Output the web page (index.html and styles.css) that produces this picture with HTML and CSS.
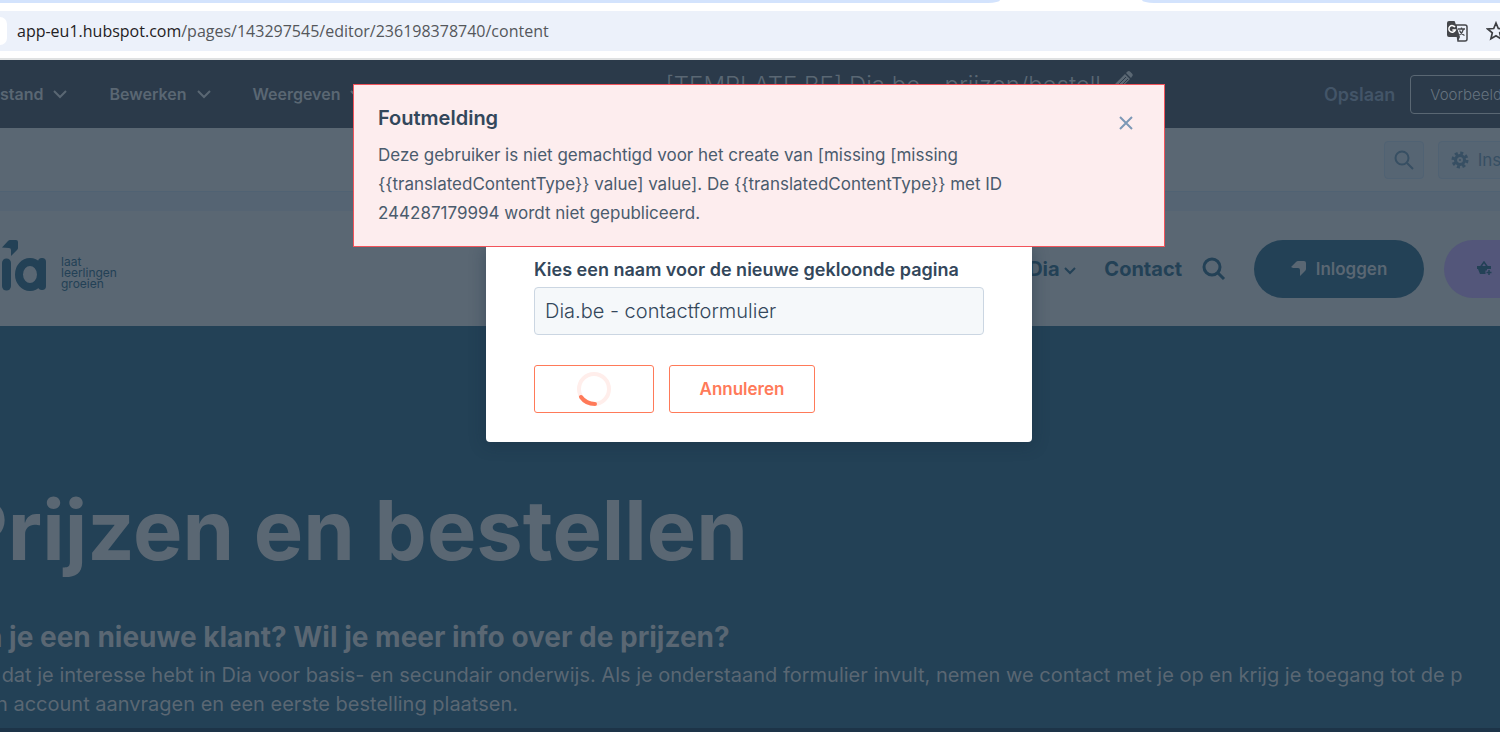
FILE: index.html
```html
<!DOCTYPE html>
<html lang="nl">
<head>
  <meta charset="UTF-8" />
  <meta name="viewport" content="width=device-width, initial-scale=1.0" />
  <title>Dia.be - prijzen/bestellen</title>
  <link rel="stylesheet" href="styles.css">
</head>
<body>
  <div class="browser">
    <div class="tab-strip"><span class="tab-left"></span><span class="tab-right"></span></div>
    <div class="address-bar">
      <span class="site-info"></span>
      <p class="url"><strong>app-eu1.hubspot.com</strong>/pages/143297545/editor/236198378740/content</p>
      <button class="chrome-btn" aria-label="Vertalen">
        <svg width="22" height="22" viewBox="0 0 22 22">
          <path d="M10 5h9q2 0 2 2v12q0 2-2 2h-7z" fill="none" stroke="#45474b" stroke-width="1.5"/>
          <path d="M3 1h5q1 0 1 1l5 15H3q-2 0-2-2V3q0-2 2-2z" fill="#45474b"/>
          <path d="M12 17h2l-2 4z" fill="#45474b"/>
          <path d="M9 7.2A3.3 3.3 0 1 0 9.3 10H6.4" fill="none" stroke="#fff" stroke-width="1.5"/>
          <path d="M12 9h7M15.5 7.5V9M17.5 9q-1 4-4 6M13.5 10.5q1.500 3.500 5 5" fill="none" stroke="#45474b" stroke-width="1.3"/>
        </svg>
      </button>
      <button class="chrome-btn star" aria-label="Bladwijzer">
        <svg width="20" height="20" viewBox="0 0 20 20"><path d="M10 2l2.3 5.5 6 .5-4.6 3.900 1.400 5.900L10 14.700l-5.100 3.100 1.400-5.900L1.700 8l6-.5z" fill="none" stroke="#3c3e42" stroke-width="1.7"/></svg>
      </button>
    </div>
  </div>

  <div class="app">
    <header class="navbar">
      <nav class="menu">
        <button class="menu-item">stand <svg width="14" height="10" viewBox="0 0 14 10"><path d="M1 2l6 6 6-6"/></svg></button>
        <button class="menu-item">Bewerken <svg width="14" height="10" viewBox="0 0 14 10"><path d="M1 2l6 6 6-6"/></svg></button>
        <button class="menu-item">Weergeven <svg width="14" height="10" viewBox="0 0 14 10"><path d="M1 2l6 6 6-6"/></svg></button>
      </nav>
      <div class="page-title">
        <span>[TEMPLATE BE] Dia.be - prijzen/bestell</span>
        <svg width="20" height="20" viewBox="0 0 20 20"><path d="M1 19l1-6L12 3l5 5L7 18zM13 2l1.500-1.500q1.500-1 3 .5l1.500 1.500q1.500 1.500 0 3L18 7z" fill="#5a6773"/><path d="M5 14l8-8M7 16l8-8" stroke="#2b3a4a"/></svg>
      </div>
      <div class="actions">
        <button class="save-btn">Opslaan</button>
        <button class="preview-btn">Voorbeeld</button>
      </div>
    </header>

    <div class="toolbar">
      <button class="tool-btn" aria-label="Zoeken">
        <svg width="20" height="20" viewBox="0 0 20 20"><circle cx="8" cy="8" r="6.5"/><path d="M13 13l6 6"/></svg>
      </button>
      <button class="tool-btn settings">
        <svg width="18" height="18" viewBox="0 0 18 18"><circle cx="9" cy="9" r="7" stroke-width="3" stroke-dasharray="3 2.5"/><circle cx="9" cy="9" r="4.5" stroke-width="3"/><circle cx="9" cy="9" r="1" fill="#374f63" stroke="none"/></svg>
        Instellingen
      </button>
    </div>

    <div class="site-header">
      <a class="logo" href="#" aria-label="Dia">
        <svg width="47" height="52" viewBox="0 0 47 52">
          <path d="M2 7.500L8 1q1-1 2-1h6q2 0 2 2v6q0 1-1 2l-6 6v-6q0-2-2-2z" fill="#234156"/>
          <path d="M6.500 23v23" stroke="#234156" stroke-width="9" stroke-linecap="round"/>
          <ellipse cx="30" cy="34.500" rx="11" ry="12.500" fill="none" stroke="#234156" stroke-width="8"/>
          <path d="M42 22v24" stroke="#234156" stroke-width="8" stroke-linecap="round"/>
        </svg>
        <span>laat<br>leerlingen<br>groeien</span>
      </a>
      <nav class="site-nav">
        <a href="#">Dia <svg width="12" height="10" viewBox="0 0 12 10"><path d="M1 2l5 5 5-5"/></svg></a>
        <a href="#">Contact</a>
        <button class="search" aria-label="Zoeken">
          <svg width="24" height="24" viewBox="0 0 24 24"><circle cx="10" cy="10" r="8"/><path d="M16 16l6 6"/></svg>
        </button>
        <a class="pill" href="#">
          <svg width="16" height="16" viewBox="0 0 16 16"><path d="M0 6l5-5q1-1 2-1h6q2 0 2 2v6q0 1-1 2l-5 5V9q0-2-2-2H2z" fill="#5a6773"/></svg>
          Inloggen
        </a>
        <a class="pill order" href="#">
          <svg width="16" height="15" viewBox="0 0 16 15"><path d="M0 5h14v3H0zM1 8h11v2l-3 3H3z" fill="#234156"/><path d="M3.500 6L7 1l3.500 5" fill="none" stroke="#234156" stroke-width="1.5"/><path d="M12 8v7M8.500 11.500h7" stroke="#53567a" stroke-width="4"/><path d="M12 9v5M9.500 11.500h5" stroke="#234156" stroke-width="1.5"/></svg>
          Bestellen
        </a>
      </nav>
    </div>

    <main class="hero">
      <h1>Prijzen en bestellen</h1>
      <h2>n je een nieuwe klant? Wil je meer info over de prijzen?</h2>
      <p>&nbsp;dat je interesse hebt in Dia voor basis- en secundair onderwijs. Als je onderstaand formulier invult, nemen we contact met je op en krijg je toegang tot de p<br>n account aanvragen en een eerste bestelling plaatsen.</p>
    </main>

    <div class="overlay">
      <section class="alert" role="alert">
        <h3>Foutmelding</h3>
        <p>Deze gebruiker is niet gemachtigd voor het create van [missing [missing<br>{{translatedContentType}} value] value]. De {{translatedContentType}} met ID<br>244287179994 wordt niet gepubliceerd.</p>
        <button class="close" aria-label="Sluiten">
          <svg width="14" height="14" viewBox="0 0 14 14"><path d="M1 1l12 12M13 1L1 13"/></svg>
        </button>
      </section>

      <form class="modal">
        <label for="name">Kies een naam voor de nieuwe gekloonde pagina</label>
        <input type="text" id="name" value="Dia.be - contactformulier">
        <div class="buttons">
          <button type="submit" class="btn loading" aria-label="Klonen">
            <svg width="34" height="34" viewBox="0 0 34 34"><circle cx="17" cy="17" r="15" stroke="#ffeeeb"/><path d="M4 25q5 7 14 7" stroke="#ff7a59" stroke-linecap="round"/></svg>
          </button>
          <button type="button" class="btn">Annuleren</button>
        </div>
      </form>
    </div>
  </div>
</body>
</html>
```
FILE: styles.css
```css
* {
  margin: 0;
  padding: 0;
  box-sizing: border-box;
}

body {
  font-family: 'Inter', sans-serif;
  background: #1d3448;
  min-height: 100vh;
  overflow: hidden;
}

button {
  font-family: inherit;
  background: none;
  border: none;
  white-space: nowrap;
}

a {
  color: inherit;
  text-decoration: none;
}

svg {
  flex-shrink: 0;
  fill: none;
}

.browser {
  background: #fff;
  padding-bottom: 7px;
  border-bottom: 2px solid #dfe1e2;
  overflow: hidden;
}

.tab-strip {
  display: flex;
  justify-content: space-between;
  height: 3px;
  margin-bottom: 8px;
}

.tab-left {
  width: 1000px;
  background: #d3e3fd;
  border-bottom-right-radius: 12px 3px;
}

.tab-right {
  width: 358px;
  background: #d3e3fd;
  border-bottom-left-radius: 12px 3px;
}

.address-bar {
  display: flex;
  align-items: center;
  height: 40px;
  background: #ecf1fa;
}

.site-info {
  width: 7px;
  height: 28px;
  background: #fff;
  border-radius: 0 14px 14px 0;
}

.url {
  flex: 1;
  margin-left: 10px;
  font-family: 'Open Sans', sans-serif;
  font-size: 16px;
  color: #54575b;
}

.url strong {
  font-weight: 400;
  color: #1f2124;
}

.chrome-btn {
  display: flex;
  margin-left: 18px;
}

.star {
  margin-right: -6px;
}

.app {
  position: relative;
  overflow: hidden;
}

.navbar {
  display: flex;
  height: 68px;
  background: #2b3a4a;
  color: #5a6773;
}

.menu {
  display: flex;
  align-items: center;
  gap: 42px;
}

.menu-item {
  display: flex;
  align-items: center;
  gap: 10px;
  font-size: 16px;
  font-weight: 600;
  color: #5a6773;
}

.menu-item svg {
  stroke: #5a6773;
  stroke-width: 2;
}

.page-title {
  display: flex;
  align-items: flex-start;
  gap: 12px;
  margin: 11px auto 0;
  padding-left: 110px;
  font-size: 24px;
  font-weight: 300;
  white-space: nowrap;
}

.actions {
  display: flex;
  align-items: center;
  gap: 15px;
  margin-right: -22px;
}

.save-btn {
  font-size: 18px;
  font-weight: 600;
  color: #435568;
}

.preview-btn {
  height: 39px;
  padding: 0 19px;
  border: 1px solid #5a6773;
  border-radius: 4px;
  font-size: 15px;
  font-weight: 300;
  color: #66737f;
}

.toolbar {
  display: flex;
  justify-content: flex-end;
  align-items: center;
  gap: 14px;
  height: 64px;
  margin-right: -82px;
  background: #5a6773;
  border-bottom: 1px solid #506273;
}

.tool-btn {
  display: flex;
  align-items: center;
  justify-content: center;
  gap: 9px;
  width: 40px;
  height: 38px;
  border: 1px solid #506273;
  border-radius: 4px;
  background: #566573;
  font-size: 17px;
  color: #374f63;
}

.tool-btn svg {
  stroke: #374f63;
  stroke-width: 2;
}

.settings {
  width: 144px;
}

.site-header {
  display: flex;
  align-items: center;
  justify-content: space-between;
  height: 134px;
  border-top: 19px solid #556473;
  background: #5a6773;
  color: #234156;
}

.logo {
  display: flex;
  align-items: center;
  gap: 14px;
  margin-bottom: 6px;
  font-size: 12px;
  line-height: 11px;
}

.logo span {
  margin-top: 14px;
}

.site-nav {
  display: flex;
  align-items: center;
  gap: 20px;
  margin-right: -110px;
  font-size: 20px;
  font-weight: 700;
}

.site-nav a:nth-child(2) {
  margin-left: 8px;
}

.site-nav a:first-child svg {
  stroke: #234156;
  stroke-width: 2;
}

.search {
  display: flex;
}

.search svg {
  stroke: #234156;
  stroke-width: 3;
}

.site-nav .pill {
  display: flex;
  align-items: center;
  justify-content: center;
  gap: 9px;
  width: 170px;
  height: 58px;
  border-radius: 29px;
  background: #234156;
  color: #5a6773;
  font-size: 17px;
  font-weight: 600;
}

.site-nav .pill:nth-child(4) {
  margin-left: 8px;
}

.site-nav .order {
  width: 166px;
  background: #53567a;
  color: #234156;
}

.hero {
  padding: 154px 0 9px;
  background: #234156;
  color: #5a6773;
  white-space: nowrap;
}

.hero h1 {
  margin-left: -46px;
  font-size: 83px;
  line-height: 100px;
  font-weight: 700;
}

.hero h2 {
  margin-top: 39px;
  margin-left: -15px;
  font-size: 28px;
  line-height: 36px;
  font-weight: 700;
}

.hero p {
  margin-top: 6px;
  margin-left: -4px;
  font-size: 20px;
  line-height: 29px;
}

.overlay {
  position: absolute;
  inset: 0;
  display: flex;
  flex-direction: column;
  align-items: center;
  padding: 24px 0 0 18px;
  color: #33475b;
}

.alert {
  position: relative;
  z-index: 1;
  width: 812px;
  padding: 18px 24px;
  background: #fdedee;
  border: 1px solid #f2545b;
}

.alert h3 {
  font-size: 20px;
  line-height: 30px;
  font-weight: 600;
}

.alert p {
  margin-top: 8px;
  font-size: 17px;
  line-height: 29px;
  color: #4a5b6d;
}

.close {
  position: absolute;
  top: 31px;
  right: 31px;
  display: flex;
}

.close svg {
  stroke: #7c98b6;
  stroke-width: 2;
}

.modal {
  width: 546px;
  padding: 9px 48px 29px;
  background: #fff;
  border-radius: 0 0 4px 4px;
  box-shadow: 0 2px 16px rgba(20, 40, 60, 0.4);
}

.modal label {
  display: block;
  font-size: 18px;
  line-height: 27px;
  font-weight: 600;
}

.modal input {
  display: block;
  width: 100%;
  height: 48px;
  margin-top: 4px;
  padding: 0 10px;
  border: 1px solid #cbd6e2;
  border-radius: 4px;
  background: #f5f8fa;
  font-family: inherit;
  font-size: 20px;
  font-weight: 300;
  color: #33475b;
}

.buttons {
  display: flex;
  gap: 15px;
  margin-top: 30px;
}

.btn {
  display: flex;
  align-items: center;
  justify-content: center;
  width: 146px;
  height: 48px;
  border: 1px solid #ff7a59;
  border-radius: 3px;
  font-size: 17px;
  font-weight: 600;
  color: #ff7a59;
}

.loading {
  width: 120px;
}

.loading svg {
  stroke-width: 4;
}
```
